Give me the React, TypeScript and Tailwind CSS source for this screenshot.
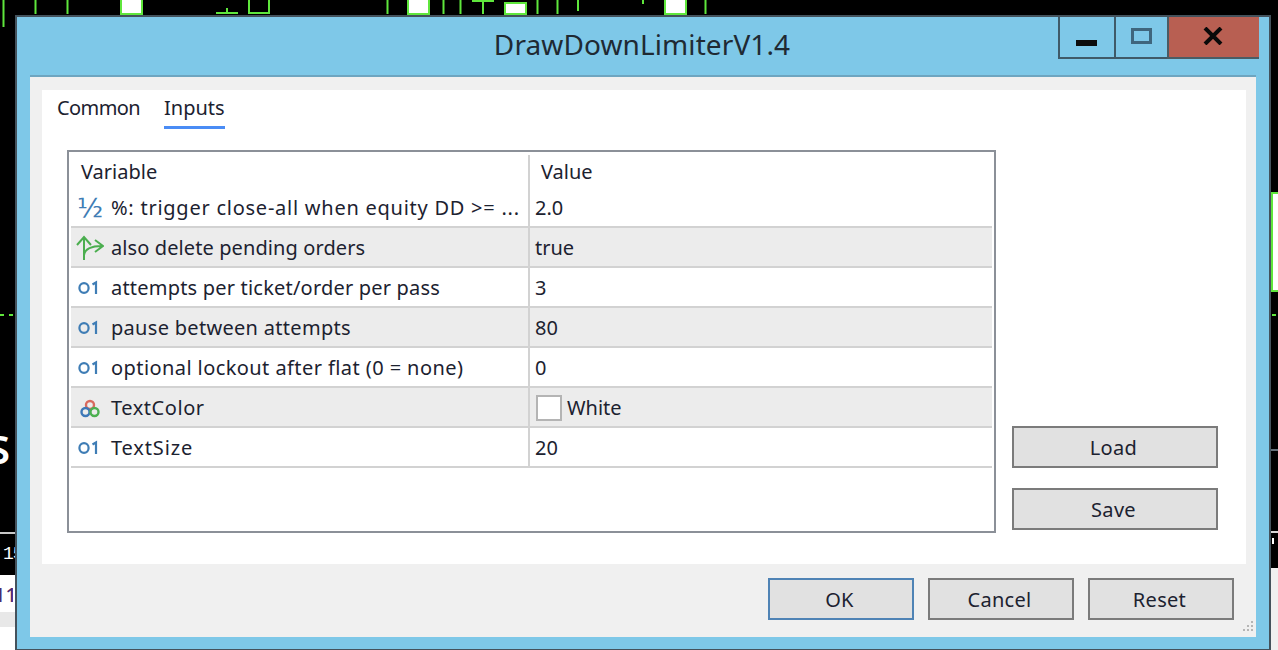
import React from "react";

const font = { fontFamily: '"Noto Sans", sans-serif' };

const rows = [
  { icon: "half", name: "%: trigger close-all when equity DD >= ...", value: "2.0", track: "tracking-[0.75px]" },
  { icon: "bool", name: "also delete pending orders", value: "true", track: "tracking-[0.1px]" },
  { icon: "int", name: "attempts per ticket/order per pass", value: "3", track: "tracking-[0.2px]" },
  { icon: "int", name: "pause between attempts", value: "80", track: "tracking-[0.3px]" },
  { icon: "int", name: "optional lockout after flat (0 = none)", value: "0", track: "tracking-[0.42px]" },
  { icon: "color", name: "TextColor", value: "White", track: "tracking-[0.55px]" },
  { icon: "int", name: "TextSize", value: "20", track: "tracking-[0.85px]" },
];

function ChartBackdrop() {
  const green = "#5fe63c";
  const wicks = [3, 35, 67, 387, 443, 460, 537, 557, 705];
  return (
    <div className="absolute inset-0 overflow-hidden bg-black">
      <svg width="1278" height="650" className="absolute left-0 top-0">
        {wicks.map((x) => (
          <line key={x} x1={x + 0.5} y1="0" x2={x + 0.5} y2={x === 3 ? 27 : 14} stroke={green} strokeWidth="2" />
        ))}
        <line x1="578" y1="0" x2="578" y2="11" stroke={green} strokeWidth="2" />
        <line x1="643" y1="0" x2="643" y2="4" stroke={green} strokeWidth="2" />
        {[121, 408, 665].map((x) => (
          <rect key={x} x={x} y="-3" width="21" height="17" fill="#fff" stroke={green} strokeWidth="2" />
        ))}
        <rect x="505" y="3" width="21" height="11" fill="#fff" stroke={green} strokeWidth="2" />
        <rect x="249" y="-3" width="20" height="16" fill="none" stroke={green} strokeWidth="2" />
        <path d="M216 13H238M227 8V13" fill="none" stroke={green} strokeWidth="2" />
        <path d="M472 1H494M483 1V14" fill="none" stroke={green} strokeWidth="2" />
        <line x1="0" y1="315" x2="15" y2="315" stroke={green} strokeWidth="2" strokeDasharray="4 5" />
        <line x1="1272" y1="315" x2="1276" y2="315" stroke={green} strokeWidth="2" />
        <rect x="1272" y="193" width="12" height="98" fill="#fff" stroke={green} strokeWidth="2" />
        <line x1="1271" y1="450" x2="1278" y2="450" stroke="#64707a" strokeWidth="2" />
        <line x1="1271" y1="532" x2="1278" y2="532" stroke="#d8d8d8" strokeWidth="2" />
        <line x1="0" y1="533" x2="15" y2="533" stroke="#c8c8c8" strokeWidth="2" />
        <rect x="1272" y="538" width="2" height="6" fill="#fff" />
        <rect x="1271" y="568" width="7" height="82" fill="#f0f0f0" />
        <rect x="0" y="575" width="15" height="37" fill="#fff" />
        <rect x="0" y="612" width="15" height="15" fill="#e8e8e8" />
        <rect x="0" y="627" width="15" height="23" fill="#fff" />
      </svg>
      <span className="absolute left-[-12px] top-[425px] text-[40px] font-semibold leading-[48px] text-white" style={font}>
        S
      </span>
      <span className="absolute left-[3px] top-[544px] w-[12px] overflow-hidden whitespace-nowrap text-[18px] leading-[20px] tracking-[-1px] text-white" style={{ fontFamily: '"Liberation Mono", monospace' }}>
        15
      </span>
      <span className="absolute left-[-6px] top-[583px] w-[19px] overflow-hidden text-right text-[20px] font-medium leading-[24px] text-[#4b2a73]" style={font}>
        11
      </span>
    </div>
  );
}

function WindowButtons() {
  return (
    <div className="absolute right-[10px] top-0 flex h-[42px]">
      <div className="flex w-[56px] items-center justify-center border-b-2 border-l-2 border-[#3f5a68]">
        <div className="mr-[2px] mt-[11px] h-[6px] w-[21px] bg-[#0c0c0c]" />
      </div>
      <div className="flex w-[53px] items-center justify-center border-b-2 border-l-2 border-[#3f5a68]">
        <div className="mb-[3px] h-[16px] w-[21px] border-[3px] border-[#3f667d]" />
      </div>
      <div className="flex w-[92px] items-center justify-center border-b-2 border-l-2 border-[#4a5c64] bg-[#b85f52]">
        <svg width="20" height="18" viewBox="0 0 20 18" className="mb-[2px] mr-[3px]">
          <path d="M2 1L18 17M18 1L2 17" stroke="#0a0a0a" strokeWidth="4" />
        </svg>
      </div>
    </div>
  );
}

function RowIcon({ kind }: { kind: string }) {
  if (kind === "half") {
    return (
      <span className="block w-[26px] text-center text-[27px] leading-[30px] text-[#3f7db5]" style={{ fontFamily: '"DejaVu Sans", sans-serif' }}>
        ½
      </span>
    );
  }
  if (kind === "bool") {
    return (
      <svg width="28" height="28" viewBox="0 0 28 28" className="block shrink-0">
        <path d="M8 26V3M1 11L8 3L15 11M8 21C9 15 14 12 26 12M19 6L27 12L19 18" fill="none" stroke="#4bae4f" strokeWidth="2" />
      </svg>
    );
  }
  if (kind === "color") {
    return (
      <svg width="20" height="19" viewBox="0 0 20 19" className="block">
        <circle cx="10" cy="6" r="4" fill="none" stroke="#d96a5e" strokeWidth="2.4" />
        <circle cx="5.5" cy="13" r="4" fill="none" stroke="#3d78b8" strokeWidth="2.4" />
        <circle cx="14.5" cy="13" r="4" fill="none" stroke="#4cb050" strokeWidth="2.4" />
      </svg>
    );
  }
  return (
    <svg width="24" height="16" viewBox="0 0 24 16" className="block">
      <ellipse cx="6" cy="8" rx="4.6" ry="4.8" fill="none" stroke="#3f7db5" strokeWidth="2.2" />
      <path d="M14.5 4.5L18 2.5V14" fill="none" stroke="#3f7db5" strokeWidth="2.2" />
    </svg>
  );
}

function Row({ row, shaded }: { row: (typeof rows)[number]; shaded: boolean }) {
  return (
    <div className={`flex h-[40px] items-center border-b-2 border-[#d2d2d2] ${shaded ? "bg-[#ececec]" : "bg-white"}`}>
      <div className="flex h-full w-[457px] items-center gap-[8px] pl-[6px] pt-[2px]">
        <div className="flex w-[26px] justify-center">
          <RowIcon kind={row.icon} />
        </div>
        <span className={`whitespace-nowrap ${row.track}`}>{row.name}</span>
      </div>
      <div className="flex h-full flex-1 items-center gap-[5px] border-l-2 border-[#d2d2d2] pl-[5px] pt-[2px]">
        {row.icon === "color" && <div className="ml-[1px] h-[26px] w-[26px] border-2 border-[#b4b4b4] bg-white" />}
        <span>{row.value}</span>
      </div>
    </div>
  );
}

function Btn({ label, focused, className }: { label: string; focused?: boolean; className: string }) {
  return (
    <div className={`flex h-[42px] items-center justify-center border-2 bg-[#e1e1e1] pr-[3px] pt-[1px] text-[20px] tracking-[0.3px] ${focused ? "border-[#4f83b5]" : "border-[#7b7b7b]"} ${className}`}>
      {label}
    </div>
  );
}

export default function App() {
  return (
    <div className="relative h-[650px] w-[1278px] overflow-hidden text-[20px] text-[#1c2230]" style={font}>
      <ChartBackdrop />
      <div className="relative ml-[15px] mt-[15px] h-[635px] w-[1256px] border-x-2 border-b border-t-2 border-[#44525c] bg-[#7ec8e8]">
        <div className="relative flex h-[58px] items-center justify-center pb-[4px] pr-[2px] text-[28px] tracking-[0.1px] text-[#1f2a33]">
          DrawDownLimiterV1.4
          <WindowButtons />
        </div>
        <div className="ml-[13px] mr-[13px] flex h-[562px] flex-col border-t-2 border-[#6ea5c0] bg-[#f0f0f0]">
          <div className="ml-[12px] mr-[10px] mt-[13px] flex h-[474px] flex-col bg-white">
            <div className="flex gap-[24px] pl-[15px] pt-[3px]">
              <div className="h-[36px] leading-[30px] tracking-[-0.6px]">Common</div>
              <div className="h-[36px] border-b-[3px] border-[#4a8cf5] leading-[30px]">Inputs</div>
            </div>
            <div className="ml-[25px] mt-[21px] flex gap-[16px]">
              <div className="flex h-[383px] w-[929px] flex-col border-2 border-[#8b9098] bg-white px-[2px]">
                <div className="flex h-[36px] items-center pt-[3px]">
                  <div className="w-[457px] pl-[10px]">Variable</div>
                  <div className="h-[33px] flex-1 border-l-2 border-[#d2d2d2] pl-[11px] leading-[33px]">Value</div>
                </div>
                {rows.map((row, i) => (
                  <Row key={row.name} row={row} shaded={i % 2 === 1} />
                ))}
              </div>
              <div className="flex flex-col justify-end gap-[20px] pb-[3px]">
                <Btn label="Load" className="w-[206px]" />
                <Btn label="Save" className="w-[206px]" />
              </div>
            </div>
          </div>
          <div className="relative flex flex-1 justify-end gap-[14px] pr-[22px] pt-[14px]">
            <Btn label="OK" focused className="w-[146px]" />
            <Btn label="Cancel" className="w-[146px]" />
            <Btn label="Reset" className="w-[146px]" />
            <svg width="16" height="16" className="absolute bottom-[2px] right-[2px]">
              <path d="M13 2h2v2h-2zM9 6h2v2H9zM13 6h2v2h-2zM5 10h2v2H5zM9 10h2v2H9zM13 10h2v2h-2z" fill="#b5b5b5" />
            </svg>
          </div>
        </div>
      </div>
    </div>
  );
}
